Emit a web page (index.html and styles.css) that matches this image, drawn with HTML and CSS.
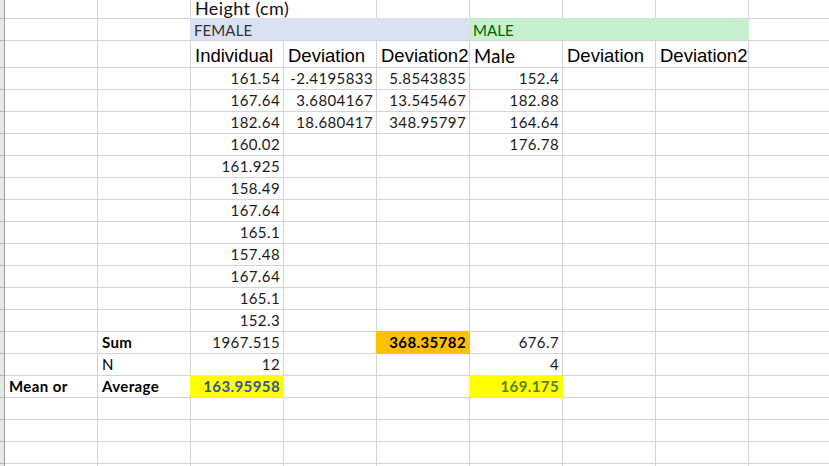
FILE: index.html
```html
<!DOCTYPE html>
<html lang="en">
<head>
<meta charset="utf-8">
<title>Height (cm)</title>
<link rel="stylesheet" href="styles.css">
</head>
<body>
<div class="sheet">
  <!-- row 1 -->
  <div class="h"></div><div class="c"></div><div class="c"></div>
  <div class="c span2 title">Height (cm)</div>
  <div class="c"></div><div class="c"></div><div class="c"></div><div class="c"></div><div class="c"></div>
  <!-- row 2 -->
  <div class="h"></div><div class="c"></div><div class="c"></div>
  <div class="c span3 fem">FEMALE</div>
  <div class="c span3 male">MALE</div>
  <div class="c"></div>
  <!-- row 3 -->
  <div class="h"></div><div class="c"></div><div class="c"></div>
  <div class="c head">Individual</div>
  <div class="c head">Deviation</div>
  <div class="c head">Deviation2</div>
  <div class="c head cal">Male</div>
  <div class="c head">Deviation</div>
  <div class="c head">Deviation2</div>
  <div class="c"></div>
  <!-- data rows -->
  <div class="h"></div><div class="c"></div><div class="c"></div><div class="c n">161.54</div><div class="c n">-2.4195833</div><div class="c n">5.8543835</div><div class="c n">152.4</div><div class="c"></div><div class="c"></div><div class="c"></div>
  <div class="h"></div><div class="c"></div><div class="c"></div><div class="c n">167.64</div><div class="c n">3.6804167</div><div class="c n">13.545467</div><div class="c n">182.88</div><div class="c"></div><div class="c"></div><div class="c"></div>
  <div class="h"></div><div class="c"></div><div class="c"></div><div class="c n">182.64</div><div class="c n">18.680417</div><div class="c n">348.95797</div><div class="c n">164.64</div><div class="c"></div><div class="c"></div><div class="c"></div>
  <div class="h"></div><div class="c"></div><div class="c"></div><div class="c n">160.02</div><div class="c"></div><div class="c"></div><div class="c n">176.78</div><div class="c"></div><div class="c"></div><div class="c"></div>
  <div class="h"></div><div class="c"></div><div class="c"></div><div class="c n">161.925</div><div class="c"></div><div class="c"></div><div class="c"></div><div class="c"></div><div class="c"></div><div class="c"></div>
  <div class="h"></div><div class="c"></div><div class="c"></div><div class="c n">158.49</div><div class="c"></div><div class="c"></div><div class="c"></div><div class="c"></div><div class="c"></div><div class="c"></div>
  <div class="h"></div><div class="c"></div><div class="c"></div><div class="c n">167.64</div><div class="c"></div><div class="c"></div><div class="c"></div><div class="c"></div><div class="c"></div><div class="c"></div>
  <div class="h"></div><div class="c"></div><div class="c"></div><div class="c n">165.1</div><div class="c"></div><div class="c"></div><div class="c"></div><div class="c"></div><div class="c"></div><div class="c"></div>
  <div class="h"></div><div class="c"></div><div class="c"></div><div class="c n">157.48</div><div class="c"></div><div class="c"></div><div class="c"></div><div class="c"></div><div class="c"></div><div class="c"></div>
  <div class="h"></div><div class="c"></div><div class="c"></div><div class="c n">167.64</div><div class="c"></div><div class="c"></div><div class="c"></div><div class="c"></div><div class="c"></div><div class="c"></div>
  <div class="h"></div><div class="c"></div><div class="c"></div><div class="c n">165.1</div><div class="c"></div><div class="c"></div><div class="c"></div><div class="c"></div><div class="c"></div><div class="c"></div>
  <div class="h"></div><div class="c"></div><div class="c"></div><div class="c n">152.3</div><div class="c"></div><div class="c"></div><div class="c"></div><div class="c"></div><div class="c"></div><div class="c"></div>
  <!-- Sum -->
  <div class="h"></div><div class="c"></div><div class="c lbl b">Sum</div><div class="c n">1967.515</div><div class="c"></div><div class="c n b fill-orange">368.35782</div><div class="c n">676.7</div><div class="c"></div><div class="c"></div><div class="c"></div>
  <!-- N -->
  <div class="h"></div><div class="c"></div><div class="c lbl">N</div><div class="c n">12</div><div class="c"></div><div class="c"></div><div class="c n">4</div><div class="c"></div><div class="c"></div><div class="c"></div>
  <!-- Mean -->
  <div class="h"></div><div class="c lbl b">Mean or</div><div class="c lbl b">Average</div><div class="c n b fill-yellow blue">163.95958</div><div class="c"></div><div class="c"></div><div class="c n b fill-yellow green">169.175</div><div class="c"></div><div class="c"></div><div class="c"></div>
  <!-- empty rows -->
  <div class="h"></div><div class="c"></div><div class="c"></div><div class="c"></div><div class="c"></div><div class="c"></div><div class="c"></div><div class="c"></div><div class="c"></div><div class="c"></div>
  <div class="h"></div><div class="c"></div><div class="c"></div><div class="c"></div><div class="c"></div><div class="c"></div><div class="c"></div><div class="c"></div><div class="c"></div><div class="c"></div>
  <div class="h"></div><div class="c"></div><div class="c"></div><div class="c"></div><div class="c"></div><div class="c"></div><div class="c"></div><div class="c"></div><div class="c"></div><div class="c"></div>
  <div class="h"></div><div class="c"></div><div class="c"></div><div class="c"></div><div class="c"></div><div class="c"></div><div class="c"></div><div class="c"></div><div class="c"></div><div class="c"></div>
</div>
</body>
</html>
```

FILE: styles.css
```css
html, body {
  margin: 0;
  padding: 0;
  background: #ffffff;
  overflow: hidden;
}

.sheet {
  display: grid;
  grid-template-columns: 5px repeat(9, 93px);
  grid-template-rows: 19px 22px 27px repeat(19, 22px);
  font-family: Lato, "Liberation Sans", sans-serif;
  font-size: 15px;
  color: #000;
  width: 842px;
}

.h {
  box-sizing: border-box;
  background: #e6e6e6;
  border-right: 1px solid #9e9e9e;
  border-bottom: 1px solid #b4b4b4;
}

.c {
  box-sizing: border-box;
  border-right: 1px solid #d4d4d4;
  border-bottom: 1px solid #d4d4d4;
  display: flex;
  align-items: flex-end;
  padding: 0 4px 3px 4px;
  line-height: 15px;
  white-space: nowrap;
  letter-spacing: 0.4px;
}

.span2 { grid-column: span 2; }
.span3 { grid-column: span 3; }

.title {
  font-size: 18px;
  line-height: 18px;
  letter-spacing: 0.4px;
  padding-bottom: 1px;
  padding-left: 4px;
  color: #111;
}

.fem {
  background: #d9e1f2;
  border-color: #d9e1f2 #d9e1f2 #d4d4d4 #d9e1f2;
  color: #333333;
  padding-bottom: 2px;
  padding-left: 3px;
  letter-spacing: 0.1px;
  box-shadow: -1px -1px 0 0 #d9e1f2;
}

.male {
  background: #c6efce;
  border-color: #c6efce #c6efce #d4d4d4 #c6efce;
  color: #006100;
  padding-bottom: 2px;
  padding-left: 3px;
  letter-spacing: 0.1px;
  box-shadow: -1px -1px 0 0 #c6efce;
}

.head {
  font-family: "Liberation Sans", Arial, sans-serif;
  font-size: 18.5px;
  line-height: 18.5px;
  letter-spacing: 0;
  padding-bottom: 2px;
  padding-left: 4px;
  overflow: visible;
}

.head.cal {
  font-family: Lato, sans-serif;
  letter-spacing: 0.3px;
}

.n {
  justify-content: flex-end;
  padding-right: 3px;
  color: #1a1a1a;
}

.lbl {
  padding-left: 4px;
}

.b {
  font-weight: 700;
  color: #000;
}

.fill-orange {
  background: #ffc000;
  border-color: #ffc000;
  box-shadow: -1px -1px 0 0 #ffc000;
}

.fill-yellow {
  background: #ffff00;
  border-color: #ffff00;
  box-shadow: -1px -1px 0 0 #ffff00;
}

.blue { color: #35559a; }
.green { color: #56802e; }
```
